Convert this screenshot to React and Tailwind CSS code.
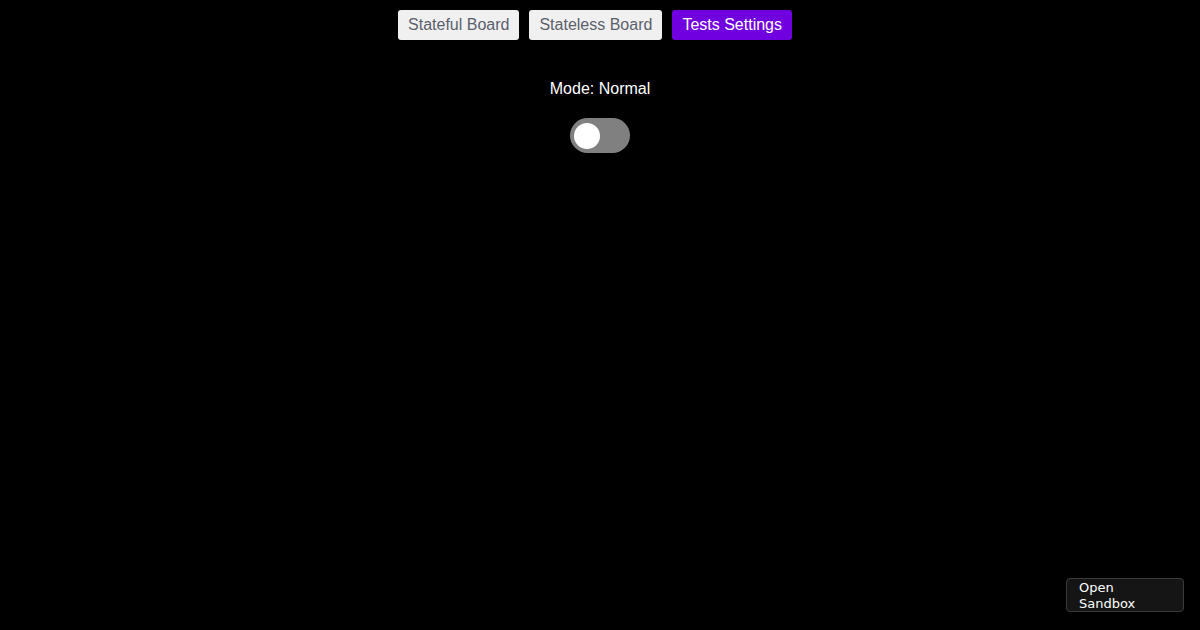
import React, { useState } from "react";

function App() {
  const [tab, setTab] = useState("tests");
  const [on, setOn] = useState(false);

  const tabs = [
    { id: "stateful", label: "Stateful Board" },
    { id: "stateless", label: "Stateless Board" },
    { id: "tests", label: "Tests Settings" },
  ];

  return (
    <div className="min-h-[630px] bg-black font-['Liberation_Sans',Arial,sans-serif] relative">
      <div className="flex flex-col items-center pt-[10px]">
        {/* Tabs */}
        <div className="flex">
          {tabs.map((t) => (
            <button
              key={t.id}
              onClick={() => setTab(t.id)}
              className={
                tab === t.id
                  ? "mr-[10px] h-[30px] px-[10px] rounded-[3px] text-base leading-[18px] bg-[#7000e0] text-white"
                  : "mr-[10px] h-[30px] px-[10px] rounded-[3px] text-base leading-[18px] bg-[#f0f0f0] text-[#5b5f6c]"
              }
            >
              {t.label}
            </button>
          ))}
        </div>

        {/* Mode */}
        <p className="mt-[40px] text-base leading-[18px] text-white">
          Mode: {on ? "Hard" : "Normal"}
        </p>

        <button
          onClick={() => setOn(!on)}
          className="mt-[20px] w-[60px] h-[35px] rounded-full bg-[#808080] flex items-center px-[4px]"
        >
          <span
            className={
              on
                ? "w-[26px] h-[26px] rounded-full bg-white ml-auto"
                : "w-[26px] h-[26px] rounded-full bg-white"
            }
          />
        </button>
      </div>

      {/* Sandbox link */}
      <button className="absolute right-[16px] bottom-[18px] w-[118px] h-[34px] rounded-[4px] bg-[#151515] border border-[#3a3a3a] text-left pl-[12px] pr-[30px] pt-[1px] text-[13px] leading-[16px] text-white font-['DejaVu_Sans',sans-serif]">
        Open Sandbox
      </button>
    </div>
  );
}

export default App;
